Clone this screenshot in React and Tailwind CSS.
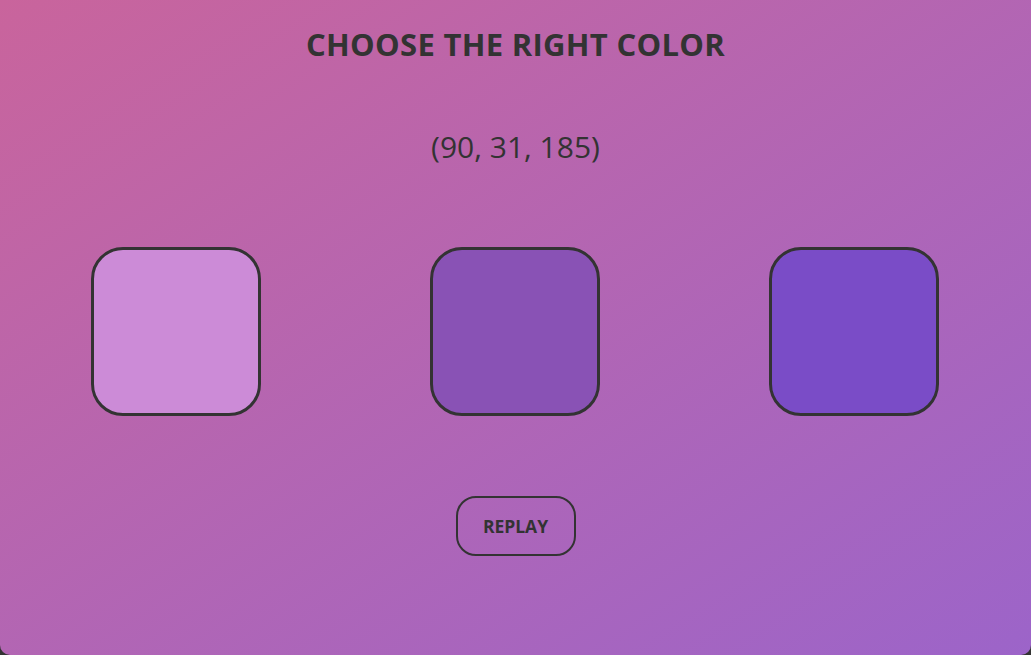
export default function App() {
  const boxes = ["#cc8bd7", "#8952b5", "#7a4cc7"];
  return (
    <div className="w-[1031px] h-[655px] bg-[#333333]">
      <div
        className="w-full h-full rounded-b-[10px] bg-gradient-to-br from-[#c9649c] to-[#9c64c9] flex flex-col items-center text-[#333333]"
        style={{ fontFamily: '"Open Sans", "Noto Sans", sans-serif' }}
      >
        <h1 className="mt-[24px] text-[31px] leading-[40px] font-bold tracking-[0.3px]">
          CHOOSE THE RIGHT COLOR
        </h1>
        <div className="mt-[63px] text-[30px] leading-[40px] font-normal">
          (90, 31, 185)
        </div>
        <div className="mt-[80px] w-full flex justify-between pl-[91px] pr-[92px]">
          {boxes.map((c) => (
            <div
              key={c}
              className="w-[170px] h-[169px] rounded-[32px] border-[3px] border-[#333333]"
              style={{ backgroundColor: c }}
            />
          ))}
        </div>
        <button className="mt-[80px] w-[120px] h-[60px] rounded-[20px] border-2 border-[#333333] text-[17.5px] font-bold text-[#333333] bg-transparent">
          REPLAY
        </button>
      </div>
    </div>
  );
}
